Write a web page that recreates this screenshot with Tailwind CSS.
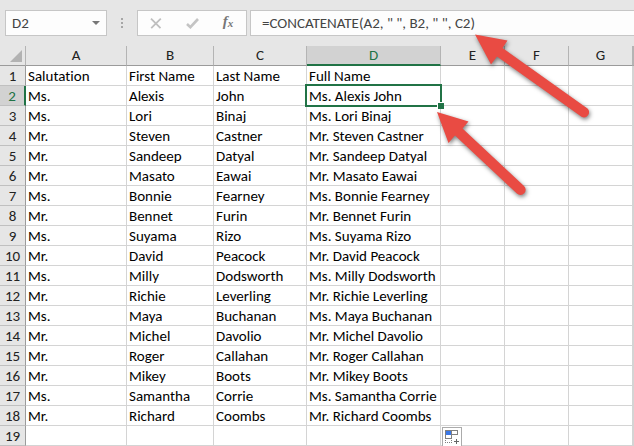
<!DOCTYPE html>
<html lang="en">
<head>
    <meta charset="UTF-8">
    <meta name="viewport" content="width=device-width, initial-scale=1.0">
    <title>Full Name - Spreadsheet</title>
    <script src="https://cdn.jsdelivr.net/npm/@tailwindcss/browser@4"></script>
</head>
<body class="relative min-h-screen overflow-hidden bg-[#e6e6e6] font-['Carlito','Lato',sans-serif] text-[15px] text-black [font-variant-ligatures:none]">

    <!-- Formula bar -->
    <header class="flex h-[46px] items-start pt-[10px] pl-[5px] text-[#444]">
        <div class="flex h-[26px] w-[102px] shrink-0 items-center border border-[#c6c6c6] bg-[#fdfdfd]">
            <input type="text" aria-label="Name box" value="D2" class="h-full w-full min-w-0 pl-[6px] outline-none">
            <button type="button" aria-label="Show names" class="h-full shrink-0 px-[6px]">
                <svg class="block" width="8" height="4" viewBox="0 0 8 4"><path d="M0 0h8L4 4z" fill="#777"/></svg>
            </button>
        </div>
        <div class="flex h-[26px] w-[30px] shrink-0 items-center justify-center">
            <svg width="2" height="10" viewBox="0 0 2 10" fill="#a6a6a6"><path d="M0 0h2v2H0zM0 4h2v2H0zM0 8h2v2H0z"/></svg>
        </div>
        <div class="flex h-[26px] w-[110px] shrink-0 items-center border border-[#c6c6c6] bg-[#fdfdfd]">
            <button type="button" aria-label="Cancel" class="flex w-9 justify-center">
                <svg width="12" height="11" viewBox="0 0 12 11" fill="none" stroke="#bfbfbf" stroke-width="1.8"><path d="M1 .7l9.5 9.4M10.8.7L1.2 10.1"/></svg>
            </button>
            <button type="button" aria-label="Enter" class="flex w-9 justify-center">
                <svg width="13" height="11" viewBox="0 0 13 11" fill="none" stroke="#c4c4c4" stroke-width="2.6"><path d="M1 6l3.4 3.2L12 1"/></svg>
            </button>
            <button type="button" aria-label="Insert function" class="flex w-9 justify-center font-['Liberation_Serif',serif] text-[15px] leading-4 font-bold text-[#777] italic">f<span class="text-[11px] leading-5">x</span></button>
        </div>
        <input type="text" aria-label="Formula" value="=CONCATENATE(A2, &quot; &quot;, B2, &quot; &quot;, C2)" class="ml-[3px] h-[26px] min-w-0 flex-1 border border-r-0 border-[#c6c6c6] bg-[#fdfdfd] pl-[11px] outline-none">
    </header>

    <!-- Sheet -->
    <table class="w-full table-fixed border-separate border-spacing-0 bg-white leading-[19px]">
        <colgroup>
            <col class="w-[26px]">
            <col class="w-[101px]">
            <col class="w-[87px]">
            <col class="w-[93px]">
            <col class="w-[134px]">
            <col class="w-[64px]">
            <col class="w-[64px]">
            <col class="w-[64px]">
            <col>
        </colgroup>
        <thead>
            <tr id="columns" class="h-5">
                <td class="border-r border-b border-r-[#b4b4b4] border-b-[#9b9b9b] bg-[#e6e6e6] p-0">
                    <svg class="ml-[10px] block" width="12" height="12" viewBox="0 0 12 12"><path d="M12 0v12H0z" fill="#b2b2b2"/></svg>
                </td>
            </tr>
        </thead>
        <tbody id="rows"></tbody>
    </table>

    <!-- Auto fill options -->
    <button type="button" aria-label="Auto fill options" class="absolute top-[427px] left-[442px] border border-[#ababab] bg-white">
        <svg class="block" width="18" height="18" viewBox="0 0 18 18" fill="none" shape-rendering="crispEdges">
            <path d="M2.500 2.500h12v4h-12zM2.500 6.500h6v4h-6zM8.500 2.500v4" stroke="#808080"/>
            <path d="M3 3h5v4H3z" fill="#3b78e7"/>
            <path d="M2 14h1v1H2zM4 14h1v1H4zM6 14h1v1H6zM8 14h1v1H8zM2 12h1v1H2zM8 12h1v1H8z" fill="#808080"/>
            <path d="M13.500 11v5M11 13.500h5" stroke="#666"/>
        </svg>
    </button>

    <!-- Callout arrows -->
    <svg class="pointer-events-none absolute top-0 left-0 drop-shadow-[1px_2px_2px_rgba(0,0,0,0.5)]" width="634" height="220" viewBox="0 0 634 220" fill="#e94b43">
        <path d="M475 34.500L507.500 40.500L502.500 48L587.500 108.500A5.200 5.200 0 0 1 581.500 116.800L497 56.500L491 64.500Z"/>
        <path d="M437 112L468.500 121.500L462.500 128.500L524 186A5.200 5.200 0 0 1 516.900 193.600L455 135.500L448.500 143Z"/>
    </svg>

    <script>
        const columns = ['A', 'B', 'C', 'D', 'E', 'F', 'G', ''];
        const people = [
            ['Ms.', 'Alexis', 'John'],
            ['Ms.', 'Lori', 'Binaj'],
            ['Mr.', 'Steven', 'Castner'],
            ['Mr.', 'Sandeep', 'Datyal'],
            ['Mr.', 'Masato', 'Eawai'],
            ['Ms.', 'Bonnie', 'Fearney'],
            ['Mr.', 'Bennet', 'Furin'],
            ['Ms.', 'Suyama', 'Rizo'],
            ['Mr.', 'David', 'Peacock'],
            ['Ms.', 'Milly', 'Dodsworth'],
            ['Mr.', 'Richie', 'Leverling'],
            ['Ms.', 'Maya', 'Buchanan'],
            ['Mr.', 'Michel', 'Davolio'],
            ['Mr.', 'Roger', 'Callahan'],
            ['Mr.', 'Mikey', 'Boots'],
            ['Ms.', 'Samantha', 'Corrie'],
            ['Mr.', 'Richard', 'Coombs']
        ];

        const columnRow = document.getElementById('columns');
        columns.forEach((name) => {
            const th = document.createElement('th');
            th.scope = 'col';
            th.textContent = name;
            th.className = name === 'D'
                ? 'border-r border-b-2 border-r-[#b4b4b4] border-b-[#217346] bg-[#d2d2d2] p-0 font-normal leading-[18px] text-[#217346]'
                : 'border-r border-b border-r-[#b4b4b4] border-b-[#9b9b9b] bg-[#e6e6e6] p-0 font-normal text-[#222]';
            columnRow.appendChild(th);
        });

        // header row, one row per person, then an empty row
        const rows = [['Salutation', 'First Name', 'Last Name', 'Full Name']];
        people.forEach((p) => rows.push([...p, p.join(' ')]));
        rows.push([]);

        const body = document.getElementById('rows');
        rows.forEach((row, r) => {
            const tr = document.createElement('tr');
            tr.className = 'h-5';

            const th = document.createElement('th');
            th.scope = 'row';
            th.textContent = r + 1;
            th.className = r === 1
                ? 'border-r-2 border-b border-r-[#217346] border-b-[#c0c0c0] bg-[#d2d2d2] p-0 pt-px font-normal leading-[18px] text-[#217346]'
                : 'border-r border-b border-r-[#9b9b9b] border-b-[#c0c0c0] bg-[#e6e6e6] p-0 pt-px font-normal leading-[18px] text-[#222]';
            tr.appendChild(th);

            columns.forEach((name, c) => {
                const td = document.createElement('td');
                td.textContent = row[c] || '';
                td.className = 'relative border-r border-b border-[#d4d4d4] p-0 pt-px pl-[2px] leading-[18px] whitespace-nowrap';
                if (name === 'D' && r === 1) {
                    // active cell outline and fill handle
                    td.insertAdjacentHTML('beforeend',
                        '<span class="absolute -inset-[2px] z-10 border-2 border-[#217346]"></span>' +
                        '<span class="absolute -right-[4px] -bottom-[4px] z-20 size-[7px] border-t border-l border-white bg-[#217346]"></span>');
                }
                tr.appendChild(td);
            });
            body.appendChild(tr);
        });
    </script>

</body>
</html>
